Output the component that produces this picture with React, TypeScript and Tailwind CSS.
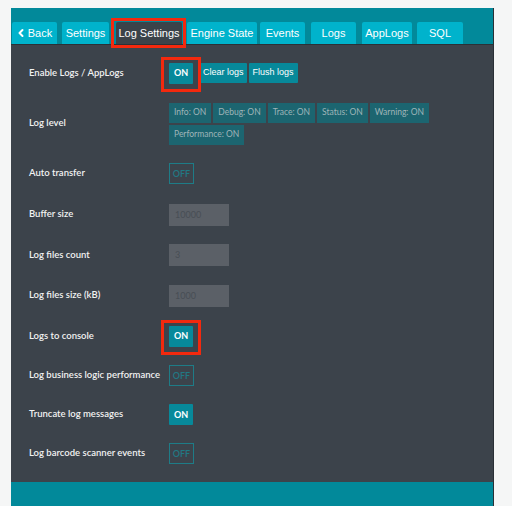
import { ChevronLeft } from 'lucide-react';

const tabs = [
  { label: 'Back', w: 'w-[45px]', ml: 'ml-[1px]', back: true },
  { label: 'Settings', w: 'w-[47px]', ml: 'ml-[5px]' },
  { label: 'Log Settings', w: 'w-[66px]', ml: 'ml-[7px]', active: true },
  { label: 'Engine State', w: 'w-[70px]', ml: 'ml-[5px]' },
  { label: 'Events', w: 'w-[45px]', ml: 'ml-[3px]' },
  { label: 'Logs', w: 'w-[45px]', ml: 'ml-[6px]' },
  { label: 'AppLogs', w: 'w-[50px]', ml: 'ml-[6px]' },
  { label: 'SQL', w: 'w-[46px]', ml: 'ml-[5px]' },
];

const levels = ['Info: ON', 'Debug: ON', 'Trace: ON', 'Status: ON', 'Warning: ON', 'Performance: ON'];

function OnButton({ marked }: { marked?: boolean }) {
  return (
    <div className="relative">
      <div className="h-[21px] w-[24px] flex items-center justify-center rounded-[1px] bg-[#07899a] text-[9px] font-bold text-white">
        ON
      </div>
      {marked && (
        <div className="absolute -left-[8px] -top-[6px] -right-[8px] -bottom-[8px] border-[3px] border-[#f3290e]" />
      )}
    </div>
  );
}

function OffButton() {
  return (
    <div className="h-[21px] w-[25px] flex items-center justify-center border border-[#1e7c87] text-[9px] font-semibold text-[#227883]">
      OFF
    </div>
  );
}

function Field({ value }: { value: string }) {
  return (
    <div className="h-[22px] w-[60px] flex items-center pl-[6px] bg-[#5b6067] text-[9px] text-[#484e55]">
      {value}
    </div>
  );
}

function Row({ label, h, children }: { label: string; h: string; children: React.ReactNode }) {
  return (
    <div className={`flex items-center ${h}`}>
      <div className="w-[140px] text-[9.5px] font-semibold text-[#f2f2f2]">{label}</div>
      {children}
    </div>
  );
}

export default function App() {
  return (
    <div
      className="w-[512px] h-[506px] overflow-hidden bg-[#f5f6f6] pt-[8px]"
      style={{ fontFamily: 'Lato, "Open Sans", sans-serif' }}
    >
      <div className="ml-[11px] w-[483px] border-r border-[#2a3036]">
        {/* Tab bar */}
        <div className="relative h-[37px] bg-[#02899a] flex items-end border-b border-[#2b3137]">
          {tabs.map((t) => (
            <div
              key={t.label}
              className={`${t.w} ${t.ml} h-[22px] flex items-center justify-center rounded-t-[2px] text-[11px] text-white ${
                t.active ? 'bg-[#3b434a]' : 'bg-[#00b3cc]'
              }`}
              style={{ fontFamily: '"Liberation Sans", Arial, sans-serif' }}
            >
              {t.back && <ChevronLeft className="w-[12px] h-[12px] -ml-[2px] mr-[1px]" strokeWidth={4} />}
              {t.label}
            </div>
          ))}
          <div className="absolute left-[100px] top-[10px] w-[75px] h-[30px] border-[3px] border-[#f3290e]" />
        </div>

        {/* Content */}
        <div className="h-[437px] bg-[#3c434b] pl-[18px]">
          <Row label="Enable Logs / AppLogs" h="h-[56px]">
            <div className="flex items-center gap-[7px]">
              <OnButton marked />
              <div className="flex items-center gap-[2px]">
                <div
                  className="h-[20px] px-[3px] flex items-center bg-[#07899a] text-[9px] text-white rounded-[1px]"
                  style={{ fontFamily: '"Liberation Sans", Arial, sans-serif' }}
                >
                  Clear logs
                </div>
                <div
                  className="h-[20px] px-[4px] flex items-center bg-[#07899a] text-[9px] text-white rounded-[1px]"
                  style={{ fontFamily: '"Liberation Sans", Arial, sans-serif' }}
                >
                  Flush logs
                </div>
              </div>
            </div>
          </Row>
          <Row label="Log level" h="h-[45px] mb-[7px]">
            <div className="flex flex-wrap gap-[2px] w-[290px]">
              {levels.map((l) => (
                <div
                  key={l}
                  className="h-[20px] px-[5px] flex items-center bg-[#1c6570] text-[8.5px] text-[#9fb4b8]"
                >
                  {l}
                </div>
              ))}
            </div>
          </Row>
          <Row label="Auto transfer" h="h-[41px]">
            <OffButton />
          </Row>
          <Row label="Buffer size" h="h-[41px]">
            <Field value="10000" />
          </Row>
          <Row label="Log files count" h="h-[40px]">
            <Field value="3" />
          </Row>
          <Row label="Log files size (kB)" h="h-[41px]">
            <Field value="1000" />
          </Row>
          <Row label="Logs to console" h="h-[40px]">
            <OnButton marked />
          </Row>
          <Row label="Log business logic performance" h="h-[39px]">
            <OffButton />
          </Row>
          <Row label="Truncate log messages" h="h-[39px]">
            <OnButton />
          </Row>
          <Row label="Log barcode scanner events" h="h-[39px]">
            <OffButton />
          </Row>
        </div>

        {/* Footer */}
        <div className="h-[30px] bg-[#02899a]" />
      </div>
    </div>
  );
}
